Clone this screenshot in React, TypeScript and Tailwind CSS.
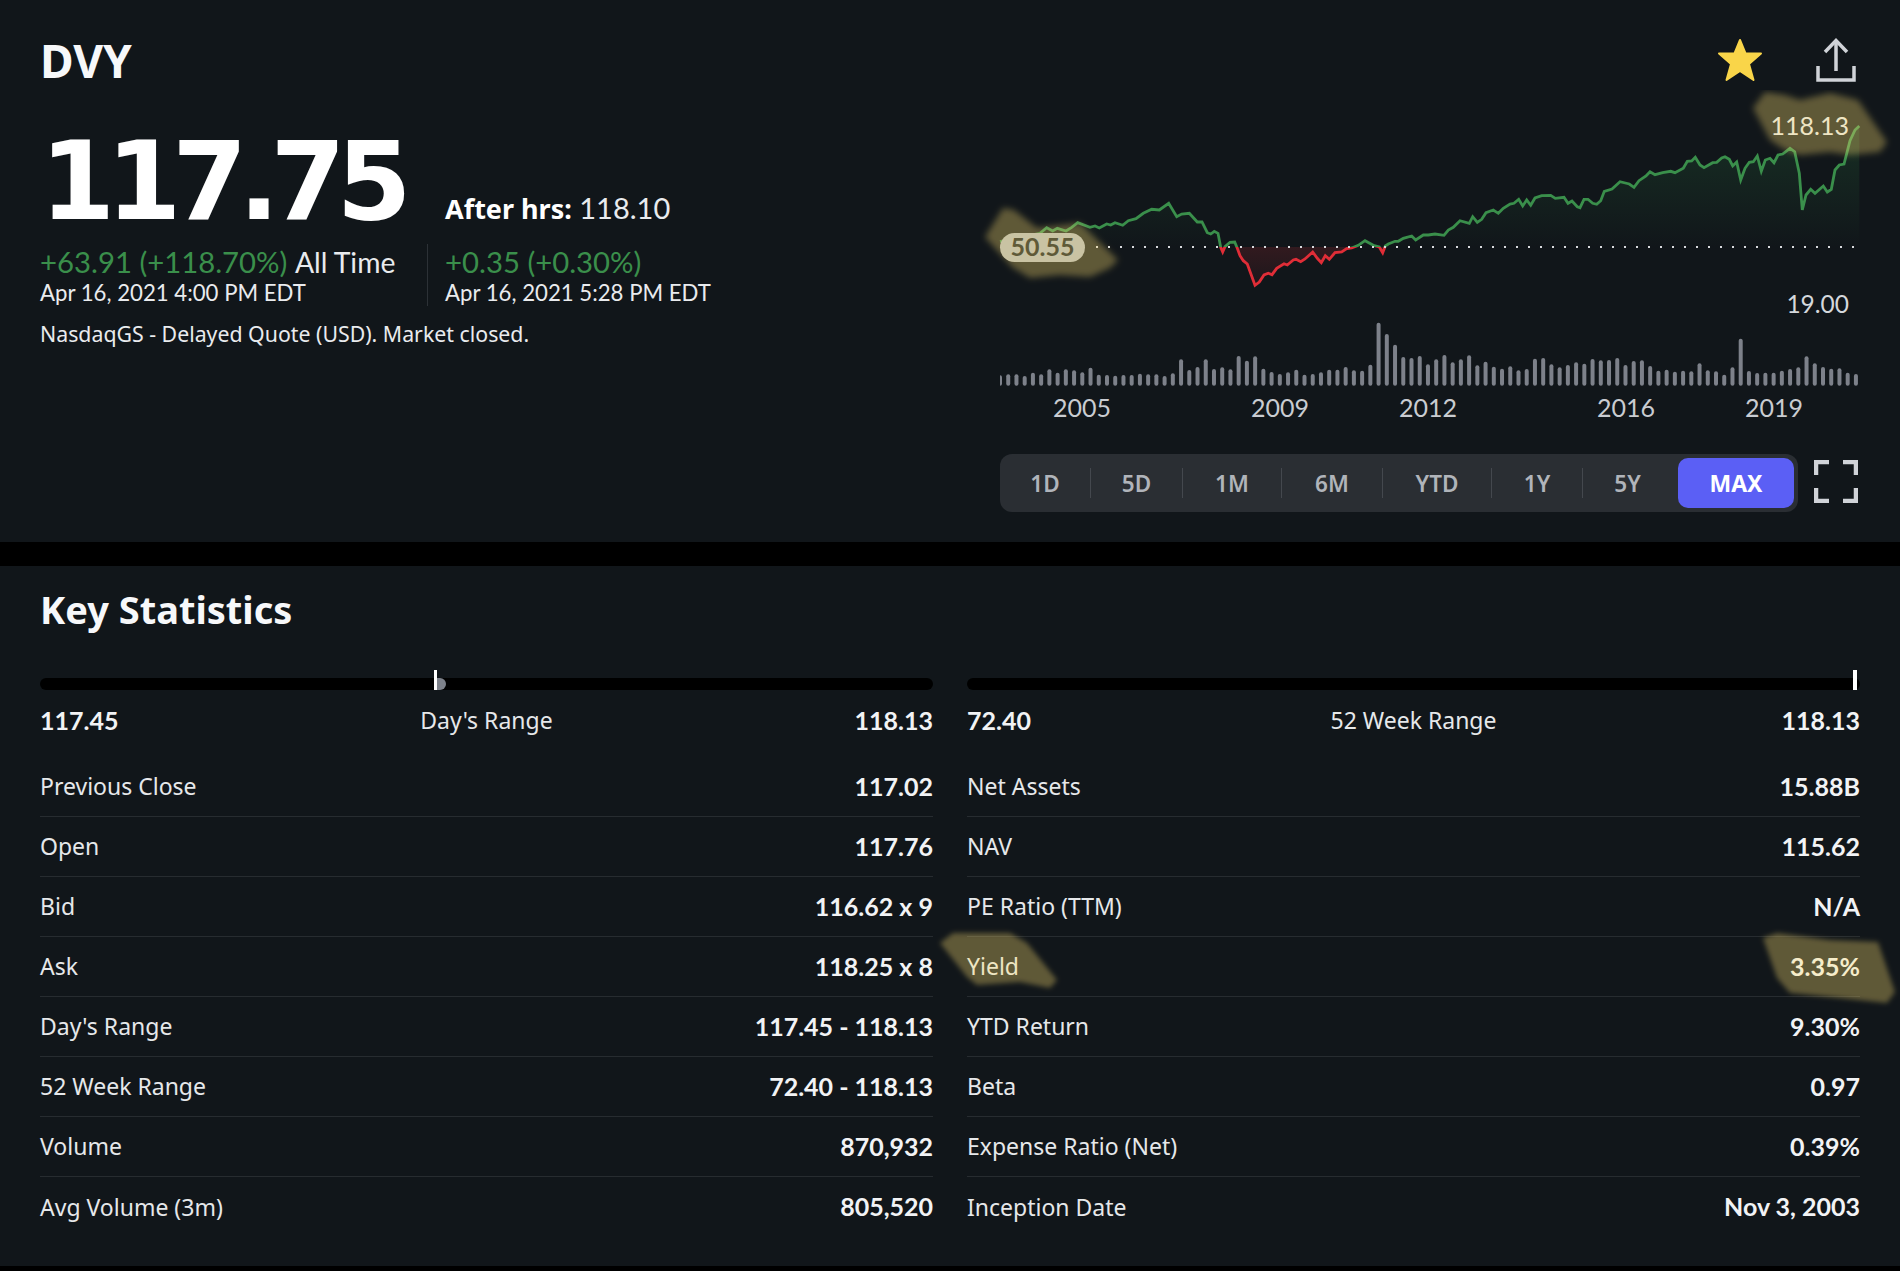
const LEFT_LINE = [
  [60, 425], [120, 412], [180, 400], [200, 383], [218, 393], [232, 385], [258, 393], [275, 382], [293, 368], [330, 382],
  [345, 378], [358, 384], [380, 372], [392, 375], [405, 368], [428, 376], [445, 362], [468, 356], [490, 340], [515, 328],
  [538, 330], [566, 310], [590, 350], [605, 342], [628, 340], [652, 366], [666, 366], [682, 398], [692, 402], [703, 394],
  [714, 400], [722, 442], [728, 456], [735, 440], [750, 427], [764, 426], [772, 445], [780, 467], [790, 482], [802, 492],
  [825, 556], [838, 546], [852, 525], [865, 520], [876, 524], [890, 505], [912, 491], [922, 495], [940, 480], [948, 478],
  [962, 485], [975, 477], [998, 456], [1012, 475], [1024, 488], [1036, 467], [1048, 478], [1065, 458], [1085, 456],
  [1100, 446], [1115, 444], [1135, 436], [1155, 422], [1180, 436], [1198, 441], [1208, 458], [1216, 438], [1225, 432],
  [1245, 424], [1255, 424], [1270, 415], [1295, 408], [1307, 420], [1330, 405], [1345, 405], [1365, 402], [1392, 406],
  [1405, 390], [1420, 382], [1440, 362],
];

const RIGHT_LINE = [
  [88, 370], [98, 350], [112, 367], [125, 358], [138, 338], [160, 330], [175, 340], [190, 325], [210, 312], [222, 310],
  [236, 298], [248, 318], [260, 300], [272, 316], [285, 294], [305, 287], [332, 286], [346, 295], [372, 292], [384, 310],
  [396, 303], [412, 320], [420, 323], [432, 298], [444, 298], [458, 310], [470, 313], [482, 302], [493, 274], [516, 267],
  [540, 245], [568, 252], [582, 262], [597, 242], [618, 228], [630, 215], [645, 224], [668, 218], [692, 214], [705, 218],
  [730, 205], [742, 184], [755, 183], [766, 172], [780, 195], [792, 203], [818, 188], [830, 187], [845, 174], [855, 170],
  [868, 178], [878, 198], [890, 186], [902, 240], [915, 205], [928, 187], [940, 185], [952, 168], [964, 214], [976, 180],
  [990, 175], [1002, 188], [1014, 165], [1028, 162], [1050, 145], [1064, 155], [1078, 220], [1087, 330], [1098, 285],
  [1112, 268], [1125, 280], [1150, 258], [1162, 276], [1174, 268], [1185, 210], [1198, 195], [1212, 192], [1230, 122],
  [1245, 90], [1258, 78],
];

// bar tops as read off the screenshot, baseline is y 227 in the same units
const VOLUME_TOPS = [
  196, 193, 193, 198, 188, 193, 178, 188, 178, 181, 187, 173, 194, 195, 197, 195, 195, 191, 193, 193, 198, 190, 148, 180,
  171, 148, 177, 172, 178, 138, 152, 139, 176, 186, 192, 187, 179, 194, 192, 187, 179, 179, 171, 181, 182, 164, 38, 72,
  104, 141, 144, 138, 163, 148, 135, 157, 148, 136, 166, 155, 170, 176, 169, 181, 177, 146, 144, 163, 172, 165, 157, 161,
  147, 151, 150, 144, 165, 153, 151, 168, 182, 179, 185, 182, 184, 160, 181, 184, 194, 172, 86, 183, 189, 188, 188, 182,
  177, 172, 139, 160, 171, 176, 175, 188, 192,
];

const YEARS = [
  { label: "2005", x: 1082 },
  { label: "2009", x: 1280 },
  { label: "2012", x: 1428 },
  { label: "2016", x: 1626 },
  { label: "2019", x: 1774 },
];

const RANGES = [
  { label: "1D", width: "w-[91px]" },
  { label: "5D", width: "w-[92px]" },
  { label: "1M", width: "w-[99px]" },
  { label: "6M", width: "w-[101px]" },
  { label: "YTD", width: "w-[109px]" },
  { label: "1Y", width: "w-[91px]" },
  { label: "5Y", width: "w-[95px] pr-[6px]" },
];

const LEFT_STATS = [
  ["Previous Close", "117.02"],
  ["Open", "117.76"],
  ["Bid", "116.62 x 9"],
  ["Ask", "118.25 x 8"],
  ["Day's Range", "117.45 - 118.13"],
  ["52 Week Range", "72.40 - 118.13"],
  ["Volume", "870,932"],
  ["Avg Volume (3m)", "805,520"],
];

const RIGHT_STATS = [
  ["Net Assets", "15.88B"],
  ["NAV", "115.62"],
  ["PE Ratio (TTM)", "N/A"],
  ["Yield", "3.35%"],
  ["YTD Return", "9.30%"],
  ["Beta", "0.97"],
  ["Expense Ratio (Net)", "0.39%"],
  ["Inception Date", "Nov 3, 2003"],
];

const LINE_POINTS = [
  ...LEFT_LINE.map(([x, y]) => [980 + x / 3, 100 + y / 3]),
  ...RIGHT_LINE.map(([x, y]) => [1440 + x / 3, 100 + y / 3]),
];
const LINE = LINE_POINTS.map(([x, y]) => `${x.toFixed(1)},${y.toFixed(1)}`).join(" ");
const AREA = `${LINE} 1859.3,247 1000,247`;

const Chart = () => (
  <svg viewBox="980 90 920 340" className="mt-2 h-[340px] w-[920px]">
    <defs>
      <linearGradient id="up" gradientUnits="userSpaceOnUse" x1="0" y1="120" x2="0" y2="247">
        <stop offset="0" stopColor="#2f8f4a" stopOpacity="0.22" />
        <stop offset="1" stopColor="#2f8f4a" stopOpacity="0" />
      </linearGradient>
      <linearGradient id="down" gradientUnits="userSpaceOnUse" x1="0" y1="247" x2="0" y2="290">
        <stop offset="0" stopColor="#e02d37" stopOpacity="0.16" />
        <stop offset="1" stopColor="#e02d37" stopOpacity="0.04" />
      </linearGradient>
      <clipPath id="above">
        <rect x="980" y="90" width="920" height="157" />
      </clipPath>
      <clipPath id="below">
        <rect x="980" y="247" width="920" height="60" />
      </clipPath>
      <clipPath id="bars">
        <rect x="1000" y="310" width="860" height="80" />
      </clipPath>
      <filter id="marker" x="-20%" y="-20%" width="140%" height="140%">
        <feGaussianBlur stdDeviation="3" />
      </filter>
    </defs>
    <polygon points={AREA} fill="url(#up)" clipPath="url(#above)" />
    <polygon points={AREA} fill="url(#down)" clipPath="url(#below)" />
    <polyline points={LINE} fill="none" stroke="#3a8f4b" strokeWidth="2.8" clipPath="url(#above)" />
    <polyline points={LINE} fill="none" stroke="#e02d37" strokeWidth="2.8" clipPath="url(#below)" />
    <line x1="1096" y1="247" x2="1856" y2="247" stroke="#d8dadd" strokeWidth="2" strokeDasharray="2 10" />

    <text x="1849" y="135" textAnchor="end" className="fill-[#e5e7eb] text-[25px]">118.13</text>
    <text x="1849" y="313" textAnchor="end" className="fill-[#d5d8dc] text-[24.5px]">19.00</text>

    <g clipPath="url(#bars)">
      {VOLUME_TOPS.map((top, i) => (
        <rect
          key={i}
          x={998 + i * 8.23}
          y={310 + top / 3}
          width="4"
          height={(227 - top) / 3}
          rx="2"
          fill="#7d818a"
        />
      ))}
    </g>
    {YEARS.map((year) => (
      <text key={year.label} x={year.x} y="417" textAnchor="middle" className="fill-[#c9ccd1] text-[25px]">
        {year.label}
      </text>
    ))}

    {/* marker pen */}
    <g filter="url(#marker)" fill="#ffe070" fillOpacity="0.33">
      <polygon points="985,237 1003,208 1014,210 1037,228 1080,223 1118,260 1110,268 1090,277 1060,275 1030,278 1012,267" />
      <polygon points="1753,108 1765,92 1785,95 1800,100 1830,93 1858,100 1887,142 1880,152 1850,155 1830,152 1800,155 1785,150 1770,140" />
    </g>

    <rect x="1000" y="233" width="85" height="29" rx="14.5" fill="#c9c3a3" />
    <text x="1042.5" y="256" textAnchor="middle" className="fill-[#5f5a38] text-[25px] font-bold">50.55</text>
  </svg>
);

const RangeBar = ({ children }: { children: React.ReactNode }) => (
  <div className="relative h-3 rounded-md bg-black">{children}</div>
);

const RangeStat = ({ low, label, high, marker }: { low: string; label: string; high: string; marker: React.ReactNode }) => (
  <div>
    <RangeBar>{marker}</RangeBar>
    <div className="mt-[14px] grid grid-cols-3 items-center leading-[32px]">
      <span className="text-[25px] font-bold text-[#f2f3f5]">{low}</span>
      <span className="text-center font-[Noto_Sans,sans-serif] text-[23px] text-[#e6e8ea]">{label}</span>
      <span className="text-right text-[25px] font-bold text-[#f2f3f5]">{high}</span>
    </div>
  </div>
);

const StatRows = ({ rows }: { rows: string[][] }) => (
  <div className="mt-[21px]">
    {rows.map(([label, value], i) => (
      <div
        key={label}
        className={`flex h-[60px] items-center justify-between ${i < rows.length - 1 ? "border-b border-[#272c30]" : ""}`}
      >
        <span className="font-[Noto_Sans,sans-serif] text-[23px] text-[#e6e8ea]">{label}</span>
        <span className="text-[25px] font-bold text-[#f2f3f5]">{value}</span>
      </div>
    ))}
  </div>
);

export default function App() {
  return (
    <div className="relative h-[1271px] w-[1900px] overflow-hidden bg-black font-[Lato,sans-serif]">
      {/* Quote */}
      <section className="flex h-[542px] justify-between bg-[#11161a]">
        <div className="pl-10 pt-[37px]">
          <h1 className="font-[Noto_Sans,sans-serif] text-[46px] font-bold leading-[46px] text-[#f7f8fa]">DVY</h1>
          <div className="mt-[45px] flex items-baseline">
            <span className="w-[405px] font-[DejaVu_Sans,sans-serif] text-[108px] font-bold leading-[108px] tracking-[-9px] text-white">117.75</span>
            <span className="text-[29px] text-[#e9ebee]">
              <span className="font-[Noto_Sans,sans-serif] text-[27px] font-bold text-white">After hrs:</span> 118.10
            </span>
          </div>
          <div className="mt-[8px] flex">
            <div className="w-[388px] border-r border-[#2c3136]">
              <div className="text-[29.3px] leading-[36px] text-[#3a8f4b]">
                +63.91 (+118.70%) <span className="text-[28.3px] text-[#e9ebee]">All Time</span>
              </div>
              <div className="text-[22.2px] leading-[26px] text-[#e9ebee]">Apr 16, 2021 4:00 PM EDT</div>
            </div>
            <div className="pl-[17px]">
              <div className="text-[29.3px] leading-[36px] text-[#3a8f4b]">+0.35 (+0.30%)</div>
              <div className="text-[22.2px] leading-[26px] text-[#e9ebee]">Apr 16, 2021 5:28 PM EDT</div>
            </div>
          </div>
          <p className="mt-[14px] font-[Noto_Sans,sans-serif] text-[21.3px] leading-[28px] text-[#e9ebee]">NasdaqGS - Delayed Quote (USD). Market closed.</p>
        </div>

        <div className="flex w-[920px] flex-col pt-[38px]">
          <div className="flex h-11 items-center justify-end gap-[53px] pr-11">
            <svg viewBox="0 0 46 44" className="h-11 w-[46px]">
              <polygon
                points="23,2 28.5,15.5 44,15.5 32,26 36.5,42 23,33 9.5,42 14,26 2,15.5 17.5,15.5"
                fill="#f9d549"
                stroke="#f9d549"
                strokeWidth="2"
                strokeLinejoin="round"
              />
            </svg>
            <svg viewBox="0 0 40 44" className="h-11 w-10" fill="none" stroke="#d0d3d8" strokeWidth="3.5">
              <path d="M2 28V42H38V28" />
              <path d="M20 33V3" />
              <path d="M9 14L20 2.5L31 14" />
            </svg>
          </div>
          <Chart />
          <div className="ml-5 mt-6 flex items-center gap-4">
            <div className="flex h-[58px] w-[798px] items-center rounded-xl bg-[#2a2e33] font-[Noto_Sans,sans-serif]">
              {RANGES.map((range, i) => (
                <div
                  key={range.label}
                  className={`flex h-[30px] items-center justify-center pt-[2px] text-[22.5px] font-semibold text-[#b0b4ba] ${range.width} ${i < 6 ? "border-r border-[#44484e]" : ""}`}
                >
                  {range.label}
                </div>
              ))}
              <div className="flex h-[50px] w-[116px] items-center justify-center rounded-[10px] bg-[#5b5ff5] text-[23px] font-bold text-white">
                MAX
              </div>
            </div>
            <svg viewBox="0 0 44 43" className="-mt-[3px] h-[43px] w-11" fill="none" stroke="#d0d3d8" strokeWidth="4.5">
              <path d="M2 15V2H15M29 2H42V15M42 28V41H29M15 41H2V28" />
            </svg>
          </div>
        </div>
      </section>

      {/* Key statistics */}
      <section className="relative mt-6 h-[700px] bg-[#11161a] px-10 pt-[20px]">
        <h2 className="font-[Noto_Sans,sans-serif] text-[38px] font-bold leading-[46px] text-[#f7f8fa]">Key Statistics</h2>
        <div className="mt-[46px] grid grid-cols-2 gap-[34px]">
          <div>
            <RangeStat
              low="117.45"
              label="Day's Range"
              high="118.13"
              marker={
                <>
                  <div className="absolute left-[394px] top-0 h-3 w-3 rounded-r-full bg-[#7d818a]" />
                  <div className="absolute -top-2 left-[394px] h-5 w-[3px] bg-white" />
                </>
              }
            />
            <StatRows rows={LEFT_STATS} />
          </div>
          <div>
            <RangeStat
              low="72.40"
              label="52 Week Range"
              high="118.13"
              marker={<div className="absolute -top-2 right-[3px] h-5 w-1 bg-white" />}
            />
            <StatRows rows={RIGHT_STATS} />
          </div>
        </div>
        <svg viewBox="0 566 1900 700" className="pointer-events-none absolute inset-0 h-[700px] w-[1900px]">
          <defs>
            <filter id="marker2" x="-20%" y="-20%" width="140%" height="140%">
              <feGaussianBlur stdDeviation="2.5" />
            </filter>
          </defs>
          <g filter="url(#marker2)" fill="#ffe070" fillOpacity="0.33">
            <polygon points="940,943 953,933 1010,933 1027,943 1057,980 1050,988 1020,982 977,985 967,977" />
            <polygon points="1763,938 1777,933 1830,940 1878,942 1895,992 1887,1003 1840,998 1790,993 1777,978" />
          </g>
        </svg>
      </section>
    </div>
  );
}
